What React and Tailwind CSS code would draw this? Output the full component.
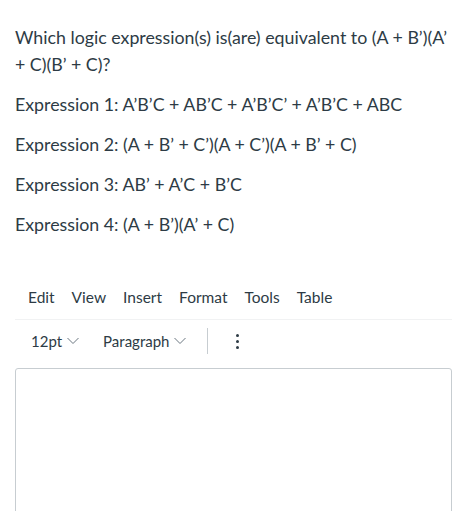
import React from 'react';

const Chevron = () => (
    <svg width="12" height="8" viewBox="0 0 12 8" className="ml-[5px]">
        <path d="M0.5 1 L6 6.5 L11.5 1" fill="none" stroke="#6b7780" strokeWidth="1" />
    </svg>
);

const App = () => {
    const expressions = [
        "Expression 1: A’B’C + AB’C + A’B’C’ + A’B’C + ABC",
        "Expression 2: (A + B’ + C’)(A + C’)(A + B’ + C)",
        "Expression 3: AB’ + A’C + B’C",
        "Expression 4: (A + B’)(A’ + C)",
    ];

    return (
        <div className="w-[466px] h-[511px] overflow-hidden bg-white text-[#2d3b45] font-['Lato','Liberation_Sans',sans-serif]">
            <div className="px-[15px] pt-[24px]">
                <div className="w-[436px] text-[17.8px] leading-[26.7px]">
                    <p className="mb-[13.3px]">Which logic expression(s) is(are) equivalent to (A + B’)(A’ + C)(B’ + C)?</p>
                    {expressions.map((e) => (
                        <p key={e} className="mb-[13.3px]">{e}</p>
                    ))}
                </div>

                <div className="mt-[39px] w-[437px]">
                    {/* menubar */}
                    <div className="flex items-center gap-[17px] pl-[13px] h-[44px] text-[15.5px] border-b border-[#f1f2f3]">
                        <span>Edit</span>
                        <span>View</span>
                        <span>Insert</span>
                        <span>Format</span>
                        <span>Tools</span>
                        <span>Table</span>
                    </div>

                    {/* toolbar */}
                    <div className="flex items-center h-[42px] text-[15px]">
                        <div className="flex items-center pl-[16px]">
                            <span>12pt</span>
                            <Chevron />
                        </div>
                        <div className="flex items-center ml-[24px]">
                            <span>Paragraph</span>
                            <Chevron />
                        </div>
                        <div className="ml-[21px] w-px h-[26px] bg-[#c7cdd1]" />
                        <div className="ml-[28px] flex flex-col gap-[3px]">
                            <span className="block w-[3px] h-[3px] rounded-full bg-[#2d3b45]" />
                            <span className="block w-[3px] h-[3px] rounded-full bg-[#2d3b45]" />
                            <span className="block w-[3px] h-[3px] rounded-full bg-[#2d3b45]" />
                        </div>
                    </div>

                    {/* editor area */}
                    <div className="mt-[6px] h-[200px] border border-[#c7cdd1] rounded-t-[3px]" />
                </div>
            </div>
        </div>
    );
};

export default App;
